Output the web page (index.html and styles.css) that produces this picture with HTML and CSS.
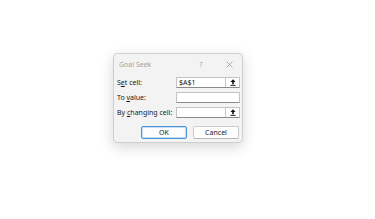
FILE: index.html
```html
<!DOCTYPE html>
<html>
<head>
<meta charset="utf-8">
<link rel="stylesheet" href="styles.css">
</head>
<body>
<div class="dialog">
  <div class="titlebar">
    <span class="title">Goal Seek</span>
    <span class="help">?</span>
    <span class="close">
      <svg width="7" height="7" viewBox="0 0 7 7"><path d="M0.5 0.5 L6.5 6.5 M6.5 0.5 L0.5 6.5" stroke="#9a9a9a" stroke-width="0.8" fill="none"/></svg>
    </span>
  </div>
  <div class="form">
    <label class="lbl">S<u>e</u>t cell:</label>
    <div class="field">
      <span class="val">$A$1</span>
      <span class="pick"><svg width="6" height="7" viewBox="0 0 6 7"><path d="M3 0.3 L5.6 3 L3.8 3 L3.8 5.2 L2.2 5.2 L2.2 3 L0.4 3 Z" fill="#111"/><rect x="0.4" y="5.9" width="5.2" height="0.9" fill="#111"/></svg></span>
    </div>
    <label class="lbl">To <u>v</u>alue:</label>
    <div class="field"><span class="val"></span></div>
    <label class="lbl">By <u>c</u>hanging cell:</label>
    <div class="field">
      <span class="val"></span>
      <span class="pick"><svg width="6" height="7" viewBox="0 0 6 7"><path d="M3 0.3 L5.6 3 L3.8 3 L3.8 5.2 L2.2 5.2 L2.2 3 L0.4 3 Z" fill="#111"/><rect x="0.4" y="5.9" width="5.2" height="0.9" fill="#111"/></svg></span>
    </div>
  </div>
  <div class="buttons">
    <button class="btn primary">OK</button>
    <button class="btn">Cancel</button>
  </div>
</div>
</body>
</html>
```
FILE: styles.css
```css
html, body {
  margin: 0;
  padding: 0;
  background: #ffffff;
}
body {
  width: 375px;
  height: 219px;
  padding: 53px 0 0 113px;
  box-sizing: border-box;
  font-family: "Noto Sans", "Open Sans", sans-serif;
  font-size: 7px;
  color: #1a1a1a;
}
.dialog {
  width: 130px;
  height: 90px;
  box-sizing: border-box;
  border: 1px solid #cfcfcf;
  border-radius: 4px;
  background: #f3f3f3;
  box-shadow: 0 4px 14px rgba(0, 0, 0, 0.16);
  display: flex;
  flex-direction: column;
}
.titlebar {
  height: 20px;
  display: flex;
  align-items: center;
  padding-left: 5px;
}
.title {
  color: #a2a2a2;
  flex: 1;
  font-size: 7px;
}
.help {
  color: #a2a2a2;
  width: 12px;
  text-align: center;
  margin-right: 16px;
  font-size: 7px;
}
.close {
  width: 12px;
  display: flex;
  justify-content: center;
  margin-right: 7px;
}
.form {
  margin-top: 3px;
  padding: 0 2px 0 3px;
  display: grid;
  grid-template-columns: 1fr 64px;
  grid-auto-rows: 11px;
  row-gap: 4px;
  align-items: center;
}
.lbl {
  color: #1a1a1a;
  white-space: nowrap;
  line-height: 11px;
}
.lbl u {
  text-underline-offset: 1px;
}
.field {
  height: 11px;
  box-sizing: border-box;
  border: 1px solid #c3c3c3;
  border-bottom-color: #8a8a8a;
  background: #fff;
  display: flex;
  border-radius: 1px;
}
.val {
  flex: 1;
  padding-left: 2px;
  line-height: 9px;
  font-size: 7px;
  color: #111;
}
.pick {
  width: 13px;
  border-left: 1px solid #c8c8c8;
  display: flex;
  align-items: center;
  justify-content: center;
}
.buttons {
  margin-top: 8px;
  display: flex;
  justify-content: flex-end;
  gap: 6px;
  padding-right: 3px;
}
.btn {
  width: 46px;
  height: 13px;
  box-sizing: border-box;
  padding: 0;
  margin: 0;
  border: 1px solid #cdcdcd;
  border-bottom-color: #b5b5b5;
  border-radius: 2px;
  background: #fdfdfd;
  font-family: "Noto Sans", "Open Sans", sans-serif;
  font-size: 7px;
  color: #1a1a1a;
  line-height: 11px;
}
.btn.primary {
  border: 1px solid #4f93d8;
  box-shadow: inset 0 0 0 0.5px #8ec0ee;
}
```
